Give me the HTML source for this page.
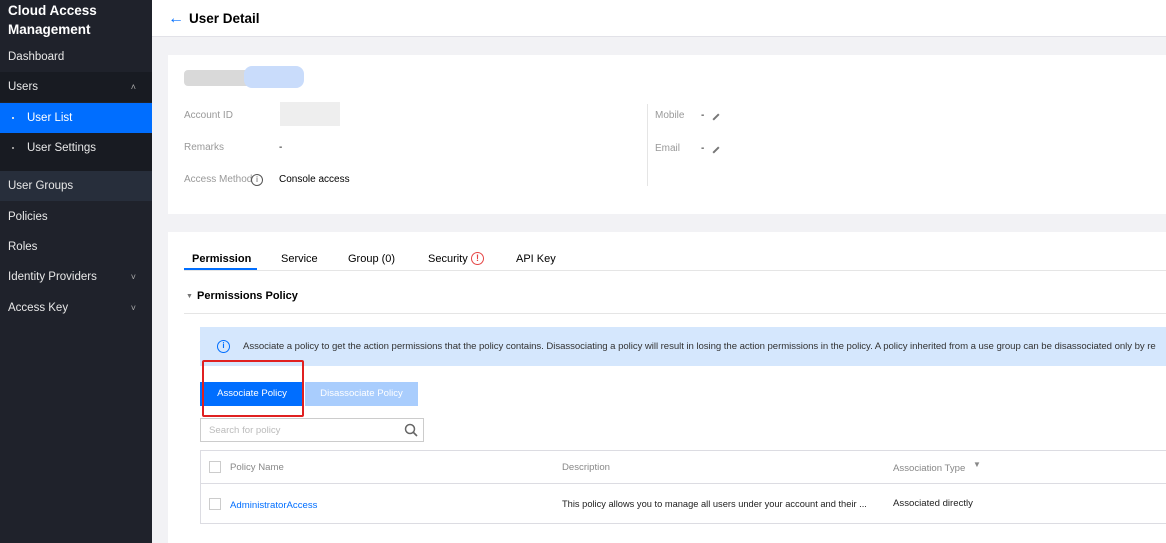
<!DOCTYPE html>
<html><head><style>
*{margin:0;padding:0;box-sizing:border-box}
body{width:1166px;height:543px;overflow:hidden;background:#f2f2f5;font-family:"Liberation Sans",Arial,sans-serif;font-size:12px;color:#000;position:relative}
.a{position:absolute;white-space:nowrap}
#sb{left:0;top:0;width:152px;height:543px;background:#1f222b;color:#fff}
#sb .i{position:absolute;left:0;width:152px;height:30px;line-height:30px;padding-left:8px;font-size:11.5px;color:#e8e8e8}
.car{position:absolute;right:16px;font-size:9px;color:#aaa}
.dot{position:absolute;left:12px;top:14px;width:2px;height:2px;background:#999}
.card{background:#fff}
.lbl{color:#999;font-size:10px}
.pen{width:8px;height:2px;background:#777;transform:rotate(-45deg)}
</style></head><body>
<div id="sb">
 <div class="a" style="left:8px;top:1px;font-weight:bold;font-size:13.5px;line-height:19px;color:#fff">Cloud Access<br>Management</div>
 <div class="i" style="top:42px">Dashboard</div>
 <div class="i" style="top:72px;background:#181b22">Users<span class="car" style="top:0">˄</span></div>
 <div class="i" style="top:103px;background:#006eff;color:#fff;padding-left:27px"><span class="dot" style="background:#cde"></span>User List</div>
 <div class="i" style="top:133px;background:#181b22;padding-left:27px;height:38px;line-height:30px"><span class="dot"></span>User Settings</div>
 <div class="i" style="top:171px;background:#272e3b">User Groups</div>
 <div class="i" style="top:202px">Policies</div>
 <div class="i" style="top:232px">Roles</div>
 <div class="i" style="top:262px">Identity Providers<span class="car">˅</span></div>
 <div class="i" style="top:293px">Access Key<span class="car">˅</span></div>
</div>
<div class="a" style="left:152px;top:0;width:1014px;height:37px;background:#fff;border-bottom:1px solid #e2e2e8"></div>
<div class="a" style="left:168px;top:10px;color:#006eff;font-size:16px">←</div>
<div class="a" style="left:189px;top:11px;font-size:13.5px;font-weight:bold">User Detail</div>

<div class="a card" style="left:168px;top:55px;width:998px;height:159px"></div>
<div class="a" style="left:184px;top:70px;width:72px;height:16px;background:#cfcfcf;border-radius:4px;opacity:.8"></div>
<div class="a" style="left:244px;top:66px;width:60px;height:22px;background:#c9dcfb;border-radius:8px"></div>
<div class="a" style="left:280px;top:102px;width:60px;height:24px;background:#eee"></div>
<div class="a lbl" style="left:184px;top:110px">Account ID</div>
<div class="a lbl" style="left:184px;top:142px">Remarks</div>
<div class="a" style="left:279px;top:142px;font-size:10px">-</div>
<div class="a lbl" style="left:184px;top:174px">Access Method</div>
<div class="a" style="left:251px;top:174px;width:12px;height:12px;border:1px solid #555;border-radius:50%;font-size:8px;text-align:center;line-height:10px;color:#555">i</div>
<div class="a" style="left:279px;top:174px;font-size:10px">Console access</div>
<div class="a" style="left:647px;top:104px;width:1px;height:82px;background:#e5e5e5"></div>
<div class="a lbl" style="left:655px;top:110px">Mobile</div>
<div class="a" style="left:701px;top:110px;font-size:10px">-</div>
<div class="a pen" style="left:712px;top:116px"></div>
<div class="a lbl" style="left:655px;top:143px">Email</div>
<div class="a" style="left:701px;top:143px;font-size:10px">-</div>
<div class="a pen" style="left:712px;top:149px"></div>

<div class="a card" style="left:168px;top:232px;width:998px;height:311px"></div>
<div class="a" style="left:184px;top:270px;width:982px;height:1px;background:#e5e5e5"></div>
<div class="a" style="left:184px;top:268px;width:73px;height:2px;background:#006eff"></div>
<div class="a" style="left:192px;top:253px;font-weight:bold;font-size:11px">Permission</div>
<div class="a" style="left:281px;top:253px;font-size:11px">Service</div>
<div class="a" style="left:348px;top:253px;font-size:11px">Group (0)</div>
<div class="a" style="left:428px;top:253px;font-size:11px">Security</div>
<div class="a" style="left:471px;top:252px;width:13px;height:13px;border:1.5px solid #e54545;border-radius:50%;color:#e54545;font-size:9px;font-weight:bold;text-align:center;line-height:10px">!</div>
<div class="a" style="left:516px;top:253px;font-size:11px">API Key</div>
<div class="a" style="left:186px;top:293px;font-size:7px;color:#777">▼</div>
<div class="a" style="left:197px;top:290px;font-weight:bold;font-size:11px">Permissions Policy</div>
<div class="a" style="left:184px;top:313px;width:982px;height:1px;background:#e5e5e5"></div>
<div class="a" style="left:200px;top:327px;width:966px;height:39px;background:#d5e7fd;overflow:hidden"></div>
<div class="a" style="left:217px;top:340px;width:13px;height:13px;border:1.5px solid #006eff;border-radius:50%;color:#006eff;font-size:8px;font-weight:bold;text-align:center;line-height:10px">i</div>
<div class="a" style="left:243px;top:341px;font-size:9.6px;color:#333;letter-spacing:-0.05px">Associate a policy to get the action permissions that the policy contains. Disassociating a policy will result in losing the action permissions in the policy. A policy inherited from a use group can be disassociated only by re</div>
<div class="a" style="left:200px;top:382px;width:104px;height:24px;background:#006eff;color:#fff;font-size:9.6px;text-align:center;line-height:24px">Associate Policy</div>
<div class="a" style="left:305px;top:382px;width:113px;height:24px;background:#a9cdfd;color:#fff;font-size:9.6px;text-align:center;line-height:24px">Disassociate Policy</div>
<div class="a" style="left:202px;top:360px;width:102px;height:57px;border:2px solid #e02020;border-radius:2px"></div>
<div class="a" style="left:200px;top:418px;width:224px;height:24px;border:1px solid #ccc;background:#fff"></div>
<div class="a" style="left:209px;top:425px;font-size:9.6px;color:#bbb">Search for policy</div>
<svg class="a" style="left:404px;top:423px" width="14" height="14"><circle cx="6" cy="6" r="4.5" fill="none" stroke="#666" stroke-width="1.5"/><path d="M9.5 9.5L13 13" stroke="#666" stroke-width="1.6"/></svg>
<div class="a" style="left:200px;top:450px;width:966px;height:74px;border:1px solid #dcdce2;border-right:none"></div>
<div class="a" style="left:200px;top:483px;width:966px;height:1px;background:#dcdce2"></div>
<div class="a" style="left:209px;top:461px;width:12px;height:12px;border:1px solid #ccc"></div>
<div class="a" style="left:209px;top:498px;width:12px;height:12px;border:1px solid #ccc"></div>
<div class="a" style="left:230px;top:462px;font-size:9.6px;color:#888">Policy Name</div>
<div class="a" style="left:562px;top:462px;font-size:9.6px;color:#888">Description</div>
<div class="a" style="left:893px;top:463px;font-size:9.6px;color:#888">Association Type</div>
<div class="a" style="left:973px;top:460px;font-size:8px;color:#888">▼</div>
<div class="a" style="left:230px;top:500px;font-size:9.6px;color:#006eff">AdministratorAccess</div>
<div class="a" style="left:562px;top:499px;font-size:9.3px;color:#222">This policy allows you to manage all users under your account and their ...</div>
<div class="a" style="left:893px;top:498px;font-size:9.6px;color:#222">Associated directly</div>
</body></html>
